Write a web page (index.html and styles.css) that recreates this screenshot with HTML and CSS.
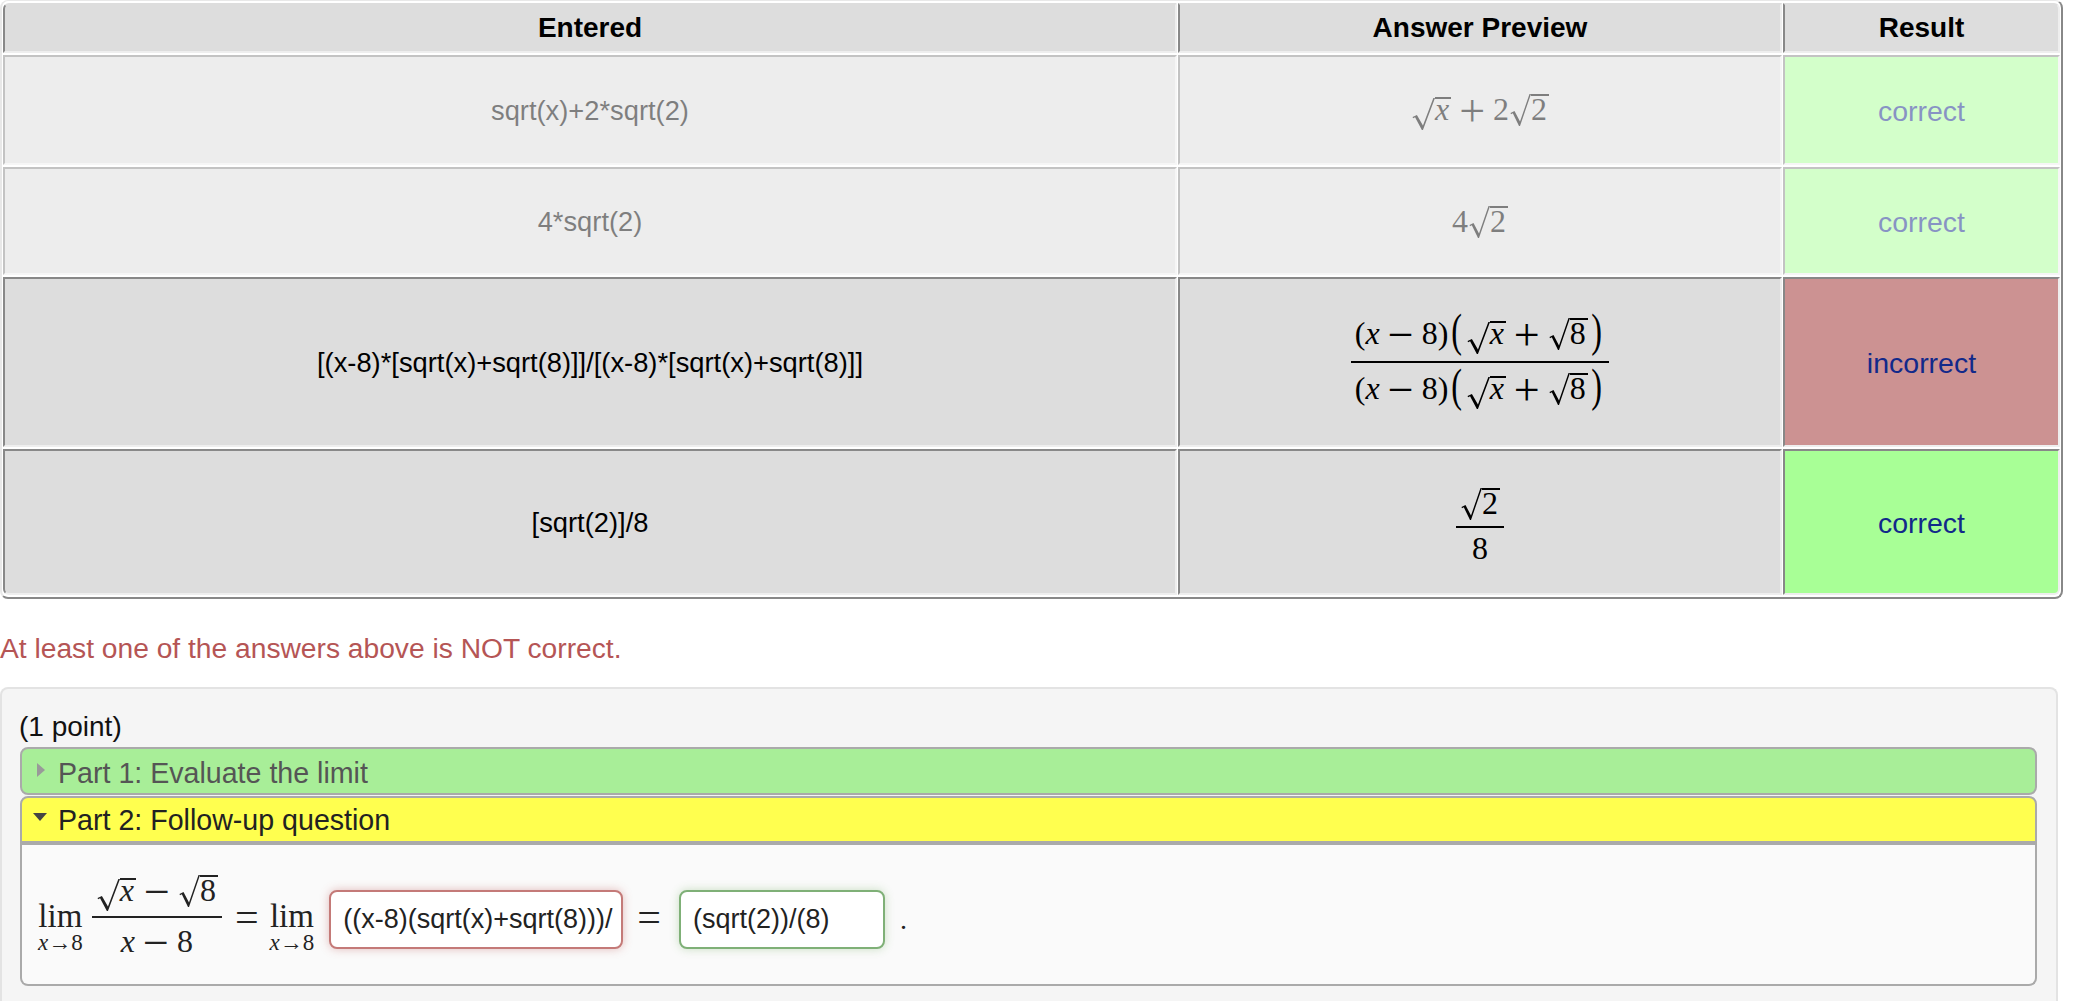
FILE: index.html
```html
<!DOCTYPE html>
<html lang="en">
<head>
    <meta charset="UTF-8">
    <title>Attempt results</title>
    <link rel="stylesheet" href="styles.css">
</head>
<body>
    <svg class="defs" width="0" height="0">
        <symbol id="radical" viewBox="0 0 21 32" preserveAspectRatio="none">
            <path d="M0.5 19 L4.5 17 L10 27.5 L19.5 0 H21 L10 32 H9 L2.8 19.3 L1 20.2 Z" fill="currentColor"/>
        </symbol>
    </svg>

    <table class="attempt-results">
        <colgroup>
            <col class="col-entered">
            <col class="col-preview">
            <col class="col-result">
        </colgroup>
        <tr class="row-head">
            <th>Entered</th>
            <th>Answer Preview</th>
            <th>Result</th>
        </tr>
        <tr class="row-one faded">
            <td>sqrt(x)+2*sqrt(2)</td>
            <td>
                <span class="math"><span class="sqrt low"><svg class="radical"><use href="#radical"/></svg><span class="radicand"><i>x</i></span></span><span class="op">+</span>2<span class="sqrt"><svg class="radical"><use href="#radical"/></svg><span class="radicand">2</span></span></span>
            </td>
            <td class="correct">correct</td>
        </tr>
        <tr class="row-two faded">
            <td>4*sqrt(2)</td>
            <td>
                <span class="math">4<span class="sqrt"><svg class="radical"><use href="#radical"/></svg><span class="radicand">2</span></span></span>
            </td>
            <td class="correct">correct</td>
        </tr>
        <tr class="row-three">
            <td>[(x-8)*[sqrt(x)+sqrt(8)]]/[(x-8)*[sqrt(x)+sqrt(8)]]</td>
            <td>
                <span class="math frac frac-tall">
                    <span class="num">(<i>x</i><span class="op">−</span>8)<span class="big-paren">(</span><span class="sqrt low"><svg class="radical"><use href="#radical"/></svg><span class="radicand"><i>x</i></span></span><span class="op">+</span><span class="sqrt"><svg class="radical"><use href="#radical"/></svg><span class="radicand">8</span></span><span class="big-paren">)</span></span>
                    <span class="den">(<i>x</i><span class="op">−</span>8)<span class="big-paren">(</span><span class="sqrt low"><svg class="radical"><use href="#radical"/></svg><span class="radicand"><i>x</i></span></span><span class="op">+</span><span class="sqrt"><svg class="radical"><use href="#radical"/></svg><span class="radicand">8</span></span><span class="big-paren">)</span></span>
                </span>
            </td>
            <td class="incorrect">incorrect</td>
        </tr>
        <tr class="row-four">
            <td>[sqrt(2)]/8</td>
            <td>
                <span class="math frac frac-small">
                    <span class="num"><span class="sqrt"><svg class="radical"><use href="#radical"/></svg><span class="radicand">2</span></span></span>
                    <span class="den">8</span>
                </span>
            </td>
            <td class="correct">correct</td>
        </tr>
    </table>

    <div class="message">At least one of the answers above is NOT correct.</div>

    <div class="problem">
        <div class="points">(1 point)</div>
        <div class="part part-done"><span class="arrow-right"></span>Part 1: Evaluate the limit</div>
        <div class="part part-open"><span class="arrow-down"></span>Part 2: Follow-up question</div>
        <div class="part-body">
            <span class="limit"><span class="lim">lim</span><span class="lim-sub"><i>x</i>→8</span></span>
            <span class="math frac frac-limit">
                <span class="num"><span class="sqrt low"><svg class="radical"><use href="#radical"/></svg><span class="radicand"><i>x</i></span></span><span class="op">−</span><span class="sqrt"><svg class="radical"><use href="#radical"/></svg><span class="radicand">8</span></span></span>
                <span class="den"><i>x</i><span class="op">−</span>8</span>
            </span>
            <span class="math equals">=</span>
            <span class="limit"><span class="lim">lim</span><span class="lim-sub"><i>x</i>→8</span></span>
            <input class="answer answer-wrong" type="text" value="((x-8)(sqrt(x)+sqrt(8)))/" readonly>
            <span class="math equals">=</span>
            <input class="answer answer-right" type="text" value="(sqrt(2))/(8)" readonly>
            <span class="stop">.</span>
        </div>
    </div>
</body>
</html>
```

FILE: styles.css
```css
html, body {
    margin: 0;
    height: 100%;
    overflow: hidden;
}
body {
    display: flex;
    flex-direction: column;
    font-family: "Liberation Sans", Arial, sans-serif;
    font-size: 28px;
    color: #111;
    background-color: white;
}
.defs {
    position: absolute;
}
.attempt-results {
    flex: none;
    table-layout: fixed;
    width: 2063px;
    border-collapse: separate;
    border-spacing: 1px 2px;
    border-style: solid;
    border-width: 1px 2px 2px 2px;
    border-color: #e8e8e8 #888 #888 #e8e8e8;
    border-radius: 8px;
}
.col-entered { width: 1174px; }
.col-preview { width: 604px; }
.col-result { width: 277px; }
.attempt-results th,
.attempt-results td {
    box-sizing: border-box;
    padding: 0;
    text-align: center;
    vertical-align: middle;
    background-color: #ddd;
    border-style: solid;
    border-width: 2px;
    border-color: #888 #eee #eee #888;
}
.attempt-results th {
    border-top-color: #ddd;
    font-weight: bold;
    color: black;
}
.attempt-results td {
    padding-top: 2px;
    font-size: 27.3px;
    color: black;
}
.row-head th { height: 50px; }
.row-one td { height: 110px; }
.row-two td { height: 108px; }
.row-three td { height: 170px; }
.row-four td { height: 146px; }
.row-head th:first-child { border-top-left-radius: 6px; }
.row-head th:last-child { border-top-right-radius: 6px; }
.row-four td:first-child { border-bottom-left-radius: 6px; }
.row-four td:last-child { border-bottom-right-radius: 6px; }
.faded td {
    opacity: 0.5;
}
.attempt-results td.correct {
    font-size: 28.5px;
    background-color: #a8ff96;
    color: #12298a;
}
.attempt-results td.incorrect {
    font-size: 28.5px;
    background-color: #cc9292;
    color: #12298a;
}

/* math */
.math {
    font-family: "Liberation Serif", "Times New Roman", serif;
    font-size: 32px;
    line-height: 1;
    white-space: nowrap;
}
.op {
    font-size: 46px;
    line-height: 0;
    margin: 0 8px;
    vertical-align: -6px;
}
.sqrt {
    display: inline-block;
    margin-left: 1px;
    white-space: nowrap;
}
.radical {
    display: inline-block;
    width: 21px;
    height: 32px;
    vertical-align: -6px;
}
.radicand {
    display: inline-block;
    padding-right: 2px;
    line-height: 0.85;
    border-top: 2px solid currentColor;
}
.low .radical {
    width: 23px;
    vertical-align: -10px;
}
.low .radicand {
    line-height: 0.63;
}
.big-paren {
    display: inline-block;
    font-size: 46px;
    line-height: 1;
    vertical-align: -2px;
    margin: 0 1px;
    transform: scaleX(0.7);
}
.frac {
    display: inline-flex;
    flex-direction: column;
    align-items: center;
    vertical-align: middle;
}
.num {
    display: block;
    padding: 0 4px 6px;
    border-bottom: 2px solid currentColor;
    align-self: stretch;
    text-align: center;
}
.den {
    display: block;
    padding: 4px 4px 0;
}
.frac-tall { margin-bottom: 10px; }
.frac-tall .num { padding-bottom: 7px; }
.frac-tall .den { padding-top: 0; }
.frac-small { margin-top: 5px; }
.frac-limit {
    margin: 0 0 7px 9px;
}
.frac-limit .num { padding: 0 4px 5px; }
.frac-limit .den { padding-top: 7px; }

/* below the table */
.message {
    flex: none;
    margin-top: 34px;
    line-height: 30px;
    font-size: 28.2px;
    color: #b55555;
}
.problem {
    flex: 1;
    box-sizing: border-box;
    width: 2058px;
    margin-top: 24px;
    padding: 24px 19px 0 18px;
    background-color: #f5f5f5;
    border: 2px solid #e3e3e3;
    border-bottom: none;
    border-radius: 8px 8px 0 0;
}
.points {
    line-height: 28px;
    margin: 0 0 6px -1px;
}
.part {
    display: flex;
    align-items: center;
    box-sizing: border-box;
    padding: 3px 0 0 36px;
    position: relative;
    border: 2px solid #aaa;
    font-size: 28.6px;
    line-height: 30px;
}
.part-done {
    height: 48px;
    margin-bottom: 1px;
    background-color: #a8ee98;
    color: #555;
    border-radius: 8px;
}
.part-open {
    height: 49px;
    padding-top: 1px;
    background-color: #ffff4f;
    color: #222;
    border-bottom-width: 4px;
    border-radius: 8px 8px 0 0;
}
.arrow-right {
    position: absolute;
    left: 15px;
    top: 14px;
    border-style: solid;
    border-width: 7px 0 7px 8px;
    border-color: transparent transparent transparent #999;
}
.arrow-down {
    position: absolute;
    left: 11px;
    top: 15px;
    border-style: solid;
    border-width: 8px 7px 0 7px;
    border-color: #444 transparent transparent transparent;
}
.part-body {
    display: flex;
    align-items: center;
    box-sizing: border-box;
    height: 141px;
    padding: 10px 0 0 16px;
    background-color: #fafafa;
    color: #222;
    border: 2px solid #aaa;
    border-top: none;
    border-radius: 0 0 8px 8px;
}
.limit {
    display: inline-flex;
    flex-direction: column;
    align-items: center;
    margin-top: 17px;
    font-family: "Liberation Serif", "Times New Roman", serif;
}
.lim {
    font-size: 33px;
    line-height: 30px;
}
.lim-sub {
    font-size: 23px;
    line-height: 24px;
}
.equals {
    font-size: 42px;
    margin: 0 11px 5px 13px;
}
.answer {
    box-sizing: border-box;
    height: 59px;
    padding: 0 4px 0 12px;
    font-family: "Liberation Sans", Arial, sans-serif;
    font-size: 27px;
    color: #222;
    background-color: white;
    border-radius: 8px;
    border: 2px solid;
    outline: none;
}
.answer-wrong {
    width: 294px;
    margin: 0 1px 0 15px;
    border-color: #c47a78;
    box-shadow: 0 0 10px rgba(185, 74, 72, 0.35);
}
.answer-right {
    width: 206px;
    margin-left: 7px;
    border-color: #7fb077;
    box-shadow: 0 0 10px rgba(90, 160, 70, 0.3);
}
.stop {
    margin-left: 15px;
    font-family: "Liberation Serif", serif;
}
.frac-limit {
    margin-bottom: 9px;
}
```
